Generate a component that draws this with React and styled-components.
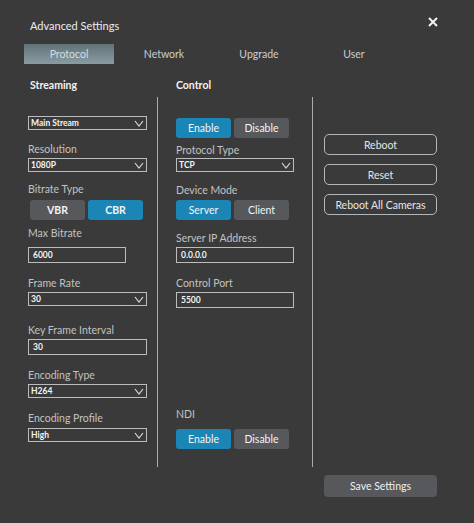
import React, { useState } from 'react'
import styled, { createGlobalStyle } from 'styled-components'

const GlobalStyle = createGlobalStyle`
	html, body {
		margin: 0;
		padding: 0;
		background: #3a3a3a;
	}
	body {
		font-family: Lato, "Open Sans", sans-serif;
		color: #c4c4c4;
	}
`

const Page = styled.div`
	width: 474px;
	height: 523px;
	box-sizing: border-box;
	padding-top: 18px;
	background: #3a3a3a;
	overflow: hidden;
`

const Header = styled.div`
	display: flex;
	align-items: center;
	justify-content: space-between;
	height: 14px;
	padding: 0 36px 0 30px;
`

const Title = styled.div`
	font-size: 11px;
	color: #ececec;
`

const CloseBtn = styled.button`
	display: flex;
	padding: 0;
	border: none;
	background: none;
	cursor: pointer;
	margin-top: -6px;
`

const Tabs = styled.div`
	display: flex;
	gap: 5px;
	margin-top: 12px;
	padding-left: 24px;
`

const Tab = styled.div`
	width: 90px;
	height: 20px;
	display: flex;
	align-items: center;
	justify-content: center;
	font-size: 10.5px;
	color: ${p => p.$active ? '#d4dde0' : '#c9ced1'};
	background: ${p => p.$active ? 'linear-gradient(#617379, #8a9ca1)' : 'transparent'};
	cursor: pointer;
`

const SectionRow = styled.div`
	display: flex;
	margin-top: 14px;
	height: 14px;
	align-items: center;
`

const SectionTitle = styled.div`
	box-sizing: border-box;
	font-size: 10.5px;
	font-weight: 700;
	color: #f2f2f2;
	width: ${p => p.$width}px;
	padding-left: ${p => p.$left}px;
`

const Columns = styled.div`
	display: flex;
	margin-top: 5px;
	padding-left: 28px;
`

const Column = styled.div`
	display: flex;
	flex-direction: column;
	align-items: flex-start;
	height: 370px;
	box-sizing: border-box;
	width: ${p => p.$width}px;
	padding: ${p => p.$top}px ${p => p.$right}px 0 ${p => p.$left}px;
	border-right: ${p => p.$divider ? '1px solid #a9abad' : 'none'};
`

const Label = styled.div`
	height: 14px;
	line-height: 14px;
	font-size: 10.5px;
	color: #c2c2c2;
	margin-top: ${p => p.$top || 0}px;
	margin-bottom: ${p => p.$gap || 0}px;
	white-space: nowrap;
`

const SelectBox = styled.div`
	display: flex;
	align-items: center;
	justify-content: space-between;
	box-sizing: border-box;
	width: ${p => p.$width || 119}px;
	height: 14px;
	margin-top: ${p => p.$top || 0}px;
	padding: 0 2px;
	border: 1px solid #bcbcbc;
	font-size: 8.5px;
	font-weight: 700;
	color: #f4f4f4;
`

const InputBox = styled.div`
	display: flex;
	align-items: center;
	box-sizing: border-box;
	flex: none;
	width: ${p => p.$width || 119}px;
	height: 16px;
	padding-left: 4px;
	border: 1px solid #bcbcbc;
	font-size: 8.5px;
	font-weight: 700;
	color: #f4f4f4;
`

const Toggle = styled.div`
	display: flex;
	gap: 3px;
	margin-top: ${p => p.$top || 0}px;
	padding-left: ${p => p.$left || 0}px;
`

const ToggleBtn = styled.button`
	width: 55px;
	height: 20px;
	padding: 0;
	border: none;
	border-radius: 3px;
	font-family: Lato, sans-serif;
	font-size: 10.5px;
	font-weight: ${p => p.$bold ? 700 : 400};
	color: #f2f4f5;
	background: ${p => p.$on ? '#1b86b6' : '#56585c'};
	cursor: pointer;
`

const OutlineBtn = styled.button`
	width: 113px;
	height: 21px;
	margin-bottom: 9px;
	padding: 0;
	box-sizing: border-box;
	border: 1.5px solid #b4b7b9;
	border-radius: 5px;
	background: transparent;
	font-family: Lato, sans-serif;
	font-size: 10.5px;
	color: #e4e7e9;
	cursor: pointer;
`

const Footer = styled.div`
	display: flex;
	justify-content: flex-end;
	padding-right: 37px;
	margin-top: 8px;
`

const SaveBtn = styled.button`
	width: 113px;
	height: 22px;
	padding: 0;
	border: none;
	border-radius: 4px;
	background: #56585c;
	font-family: Lato, sans-serif;
	font-size: 10.5px;
	color: #eef0f1;
	cursor: pointer;
`

const Chevron = () => (
	<svg width="10" height="7" viewBox="0 0 10 7">
		<path d="M1 1 L5 6 L9 1" fill="none" stroke="#d8d8d8" strokeWidth="1.2" />
	</svg>
)

const Select = ({ value, top, width }) => (
	<SelectBox $top={top} $width={width}>
		<span>{value}</span>
		<Chevron />
	</SelectBox>
)

const Switch = ({ options, value, onChange, top, left, bold }) => (
	<Toggle $top={top} $left={left}>
		{options.map(opt => (
			<ToggleBtn key={opt} $on={value === opt} $bold={bold} onClick={() => onChange(opt)}>{opt}</ToggleBtn>
		))}
	</Toggle>
)

export default function App() {
	let [tab, setTab] = useState('Protocol')
	let [bitrate, setBitrate] = useState('CBR')
	let [control, setControl] = useState('Enable')
	let [mode, setMode] = useState('Server')
	let [ndi, setNdi] = useState('Enable')

	return <Page>
		<GlobalStyle />
		<Header>
			<Title>Advanced Settings</Title>
			<CloseBtn>
				<svg width="10" height="10" viewBox="0 0 10 10">
					<path d="M1 1 L9 9 M9 1 L1 9" stroke="#f4f4f4" strokeWidth="2" />
				</svg>
			</CloseBtn>
		</Header>

		<Tabs>
			{['Protocol', 'Network', 'Upgrade', 'User'].map(t => (
				<Tab key={t} $active={tab === t} onClick={() => setTab(t)}>{t}</Tab>
			))}
		</Tabs>

		<SectionRow>
			<SectionTitle $width={176} $left={30}>Streaming</SectionTitle>
			<SectionTitle $width={120} $left={0}>Control</SectionTitle>
		</SectionRow>

		<Columns>
			{/* streaming */}
			<Column $width={130} $top={19} $right={10} $left={0} $divider>
				<Select value="Main Stream" />
				<Label $top={12} $gap={2}>Resolution</Label>
				<Select value="1080P" />
				<Label $top={10}>Bitrate Type</Label>
				<Switch options={['VBR', 'CBR']} value={bitrate} onChange={setBitrate} top={4} left={2} bold />
				<Label $top={6} $gap={7}>Max Bitrate</Label>
				<InputBox $width={98}>6000</InputBox>
				<Label $top={13} $gap={2}>Frame Rate</Label>
				<Select value="30" />
				<Label $top={17} $gap={2}>Key Frame Interval</Label>
				<InputBox>30</InputBox>
				<Label $top={13} $gap={2}>Encoding Type</Label>
				<Select value="H264" />
				<Label $top={13} $gap={3}>Encoding Profile</Label>
				<Select value="High" />
			</Column>

			{/* control */}
			<Column $width={155} $top={21} $right={18} $left={18} $divider>
				<Switch options={['Enable', 'Disable']} value={control} onChange={setControl} />
				<Label $top={5} $gap={1}>Protocol Type</Label>
				<Select value="TCP" width={118} />
				<Label $top={11}>Device Mode</Label>
				<Switch options={['Server', 'Client']} value={mode} onChange={setMode} top={3} />
				<Label $top={11} $gap={2}>Server IP Address</Label>
				<InputBox $width={118}>0.0.0.0</InputBox>
				<Label $top={13} $gap={2}>Control Port</Label>
				<InputBox $width={118}>5500</InputBox>
				<Label $top={99}>NDI</Label>
				<Switch options={['Enable', 'Disable']} value={ndi} onChange={setNdi} top={8} />
			</Column>

			{/* actions */}
			<Column $width={130} $top={37} $right={0} $left={11}>
				<OutlineBtn>Reboot</OutlineBtn>
				<OutlineBtn>Reset</OutlineBtn>
				<OutlineBtn>Reboot All Cameras</OutlineBtn>
			</Column>
		</Columns>

		<Footer>
			<SaveBtn>Save Settings</SaveBtn>
		</Footer>
	</Page>
}
